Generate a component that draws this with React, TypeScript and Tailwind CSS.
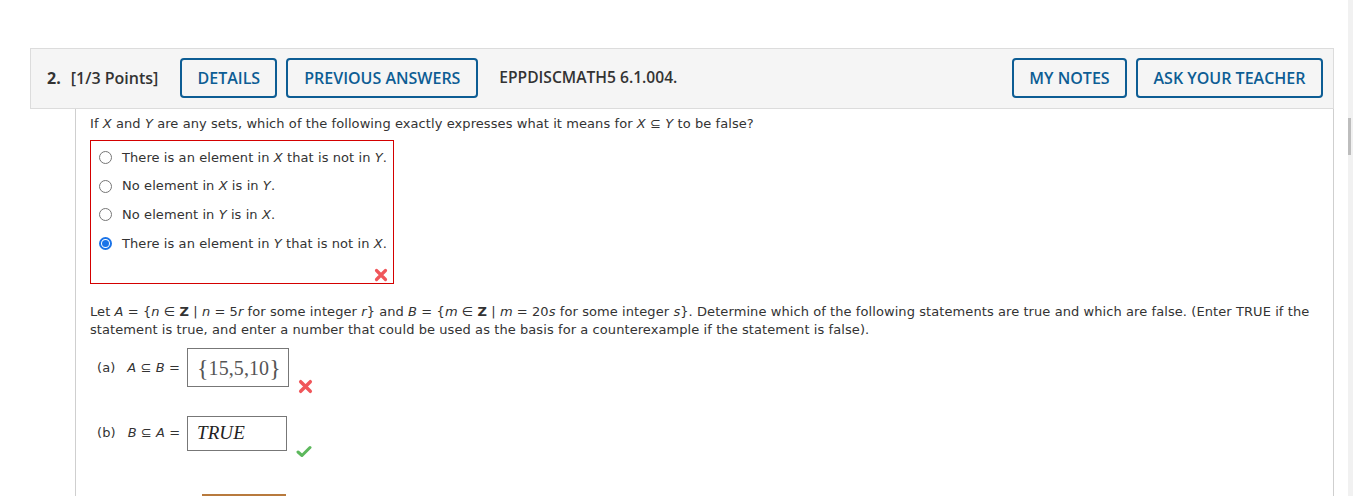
import React from "react";

const hdr = { fontFamily: '"Open Sans", "Noto Sans", sans-serif' };
const body = { fontFamily: '"DejaVu Sans", Verdana, sans-serif' };
const serif = { fontFamily: '"Liberation Serif", "DejaVu Serif", serif' };

function Btn({ w, children }: { w: string; children: React.ReactNode }) {
  return (
    <div
      className={`${w} h-[40px] flex items-center justify-center border-2 border-[#0d5d94] rounded-[4px] text-[#0d5d94] text-[16px] font-semibold bg-transparent`}
      style={hdr}
    >
      {children}
    </div>
  );
}

function Radio({ checked }: { checked?: boolean }) {
  return checked ? (
    <span className="w-[13px] h-[13px] rounded-full border-[2px] border-[#1a73e8] flex items-center justify-center shrink-0">
      <span className="w-[7px] h-[7px] rounded-full bg-[#1a73e8]" />
    </span>
  ) : (
    <span className="w-[13px] h-[13px] rounded-full border border-[#767676] bg-white shrink-0" />
  );
}

function RedX({ size = 14 }: { size?: number }) {
  return (
    <svg width={size} height={size} viewBox="0 0 14 14">
      <path d="M2.5 2.5 L11.5 11.5 M11.5 2.5 L2.5 11.5" stroke="#f0565a" strokeWidth="3.2" strokeLinecap="round" />
    </svg>
  );
}

function Check() {
  return (
    <svg width="16" height="13" viewBox="0 0 16 13">
      <path d="M2 7 L6 10.5 L14 2.5" stroke="#5cb85c" strokeWidth="3" fill="none" strokeLinecap="round" strokeLinejoin="round" />
    </svg>
  );
}

const I = ({ children }: { children: React.ReactNode }) => <i>{children}</i>;

function Option({ checked, children }: { checked?: boolean; children: React.ReactNode }) {
  return (
    <div className="flex items-center h-[28.7px] pl-[8px]">
      <Radio checked={checked} />
      <span className="ml-[10px]">{children}</span>
    </div>
  );
}

export default function App() {
  return (
    <div className="w-[1353px] h-[496px] bg-white relative overflow-hidden text-[#333]">
      <div className="pt-[48px] pl-[30px] w-[1334px]">
        <div className="h-[61px] bg-[#f5f5f5] border border-[#dcdcdc] flex items-center pl-[16px] pr-[10px] pb-[1px]">
          <span className="text-[16px] font-bold text-[#333]" style={hdr}>2.</span>
          <span className="ml-[10px] text-[16px] font-semibold text-[#333]" style={hdr}>[1/3 Points]</span>
          <div className="ml-[22px] flex gap-[9px]">
            <Btn w="w-[97px]">DETAILS</Btn>
            <Btn w="w-[192px]">PREVIOUS ANSWERS</Btn>
          </div>
          <span className="ml-[21px] text-[15.6px] font-semibold text-[#333]" style={hdr}>EPPDISCMATH5 6.1.004.</span>
          <div className="ml-auto flex gap-[9px]">
            <Btn w="w-[115px]">MY NOTES</Btn>
            <Btn w="w-[187px]">ASK YOUR TEACHER</Btn>
          </div>
        </div>
        <div className="ml-[45px] border-l border-r border-[#cfcfcf] h-[400px] pl-[14px] pt-[6px] text-[13px] tracking-[0.08px] text-[#333]" style={body}>
          <div className="leading-[18px]">
            If <I>X</I> and <I>Y</I> are any sets, which of the following exactly expresses what it means for <I>X</I> ⊆ <I>Y</I> to be false?
          </div>
          <div className="mt-[7px] w-[304px] h-[144px] border border-[#d40000] pt-[2px] relative">
            <Option>There is an element in <I>X</I> that is not in <I>Y</I>.</Option>
            <Option>No element in <I>X</I> is in <I>Y</I>.</Option>
            <Option>No element in <I>Y</I> is in <I>X</I>.</Option>
            <Option checked>There is an element in <I>Y</I> that is not in <I>X</I>.</Option>
            <div className="flex justify-end pr-[5px] mt-[10px]">
              <RedX />
            </div>
          </div>
          <div className="mt-[19px] leading-[18px] w-[1230px]">
            Let <I>A</I> = {"{"}<I>n</I> ∈ <b>Z</b> | <I>n</I> = 5<I>r</I> for some integer <I>r</I>{"}"} and <I>B</I> = {"{"}<I>m</I> ∈ <b>Z</b> | <I>m</I> = 20<I>s</I> for some integer <I>s</I>{"}"}. Determine which of the following statements are true and which are false. (Enter TRUE if the statement is true, and enter a number that could be used as the basis for a counterexample if the statement is false).
          </div>
          <div className="mt-[9px] flex items-start pl-[7px]">
            <div className="flex items-center h-[39px] w-[90px]">
              <span>(a)</span>
              <span className="ml-[12px]"><I>A</I> ⊆ <I>B</I> =</span>
            </div>
            <div className="w-[102px] h-[39px] border border-[#777] flex items-center pl-[9px] text-[20px] text-[#555]" style={serif}>
              <span className="text-[24px] leading-none font-light">{"{"}</span>15,5,10<span className="text-[24px] leading-none font-light">{"}"}</span>
            </div>
            <div className="ml-[9px] mt-[31px]"><RedX size={15} /></div>
          </div>
          <div className="mt-[22px] flex items-start pl-[7px]">
            <div className="flex items-center h-[34px] w-[90px]">
              <span>(b)</span>
              <span className="ml-[12px]"><I>B</I> ⊆ <I>A</I> =</span>
            </div>
            <div className="w-[100px] h-[35px] border border-[#777] flex items-center pl-[9px] text-[19px] text-[#222] italic" style={serif}>
              TRUE
            </div>
            <div className="ml-[9px] mt-[29px]"><Check /></div>
          </div>
          <div className="mt-[36px] ml-[112px] w-[84px] h-[2px] bg-[#b87a3d]" />
        </div>
      </div>
      <div className="absolute right-0 top-0 w-[5px] h-[496px] bg-[#f1f1f1]">
        <div className="mt-[118px] w-[3px] h-[37px] bg-[#bdbdbd]" />
      </div>
    </div>
  );
}
